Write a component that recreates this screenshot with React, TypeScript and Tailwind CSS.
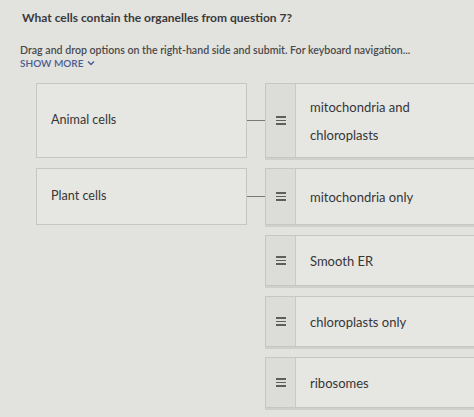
import React from 'react';

type Row = {
  left?: string;
  right: string[];
  height: number;
};

const rows: Row[] = [
  { left: 'Animal cells', right: ['mitochondria and', 'chloroplasts'], height: 75 },
  { left: 'Plant cells', right: ['mitochondria only'], height: 57 },
  { right: ['Smooth ER'], height: 51 },
  { right: ['chloroplasts only'], height: 51 },
  { right: ['ribosomes'], height: 51 },
];

function Handle() {
  return (
    <div className="flex w-[30px] shrink-0 items-center justify-center border-r border-[#c9c9c6] bg-[#dcdcd9]">
      <div className="flex w-[10px] flex-col gap-[2px]">
        <div className="h-[1.5px] bg-[#5e5e5c]" />
        <div className="h-[1.5px] bg-[#5e5e5c]" />
        <div className="h-[1.5px] bg-[#5e5e5c]" />
      </div>
    </div>
  );
}

export default function App() {
  return (
    <div
      className="h-[417px] w-[474px] overflow-hidden bg-[#e2e2df] text-[#363636]"
      style={{ fontFamily: 'Lato, "Open Sans", sans-serif' }}
    >
      <div className="px-[22px] pt-[10px]">
        <h1 className="text-[12px] font-bold leading-[16px] text-[#3a3a3a]">
          What cells contain the organelles from question 7?
        </h1>
        <p className="mt-[18px] -ml-[2px] text-[10.6px] font-semibold leading-[12px] text-[#4a4a4a]">
          Drag and drop options on the right-hand side and submit. For keyboard navigation...
        </p>
        <button className="-ml-[2px] mt-[1px] flex items-center gap-[4px] text-[10px] font-semibold leading-[12px] text-[#4b5d93]">
          SHOW MORE
          <svg width="8" height="6" viewBox="0 0 8 6" fill="none">
            <path d="M1 1.5 L4 4.5 L7 1.5" stroke="#4b5d93" strokeWidth="1.4" />
          </svg>
        </button>
      </div>

      <div className="mt-[14px] flex flex-col gap-[10px]">
        {rows.map((row, i) => (
          <div key={i} className="flex items-stretch" style={{ height: row.height }}>
            <div className="ml-[36px] w-[211px] shrink-0">
              {row.left && (
                <div className="flex h-full items-center border border-[#c6c6c3] bg-[#e6e6e3] pl-[14px] text-[12.6px]">
                  {row.left}
                </div>
              )}
            </div>
            <div className="flex w-[18px] shrink-0 items-center">
              {row.left && <div className="h-[1px] w-full bg-[#7a7a78]" />}
            </div>
            <div className="flex w-[230px] shrink-0 border border-[#c6c6c3] bg-[#e6e6e3] shadow-[0_2px_0_#cfcfcc]">
              <Handle />
              <div className="flex flex-col justify-center pl-[14px] text-[13px] leading-[28px]">
                {row.right.map((line) => (
                  <span key={line}>{line}</span>
                ))}
              </div>
            </div>
          </div>
        ))}
      </div>
    </div>
  );
}
